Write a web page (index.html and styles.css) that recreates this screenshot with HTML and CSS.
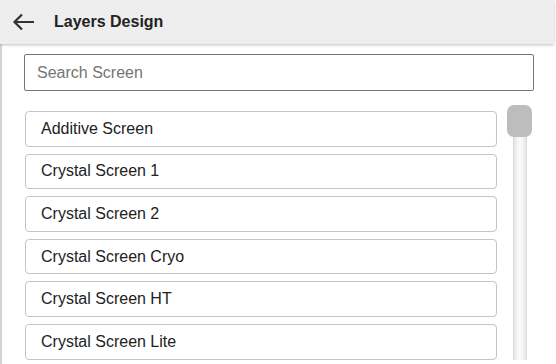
FILE: index.html
```html
<!DOCTYPE html>
<html>
<head>
<meta charset="utf-8">
<link rel="stylesheet" href="styles.css">
</head>
<body>
<div class="app">
  <header class="topbar">
    <button class="back" aria-label="Back">
      <svg width="24" height="24" viewBox="0 0 24 24"><path d="M23 12H3.5M11 4.5L3.5 12L11 19.5" fill="none" stroke="#333" stroke-width="2.2"/></svg>
    </button>
    <h1 class="title">Layers Design</h1>
  </header>
  <main class="content">
    <div class="search-row">
      <input class="search" type="text" placeholder="Search Screen">
    </div>
    <div class="list-area">
      <ul class="list">
        <li class="item">Additive Screen</li>
        <li class="item">Crystal Screen 1</li>
        <li class="item">Crystal Screen 2</li>
        <li class="item">Crystal Screen Cryo</li>
        <li class="item">Crystal Screen HT</li>
        <li class="item">Crystal Screen Lite</li>
      </ul>
      <div class="scrollbar">
        <div class="track"></div>
        <div class="thumb"></div>
      </div>
    </div>
  </main>
</div>
</body>
</html>
```
FILE: styles.css
```css
* { box-sizing: border-box; }
html, body { margin: 0; padding: 0; height: 100%; overflow: hidden; background: #fff; }
body { font-family: "Liberation Sans", Arial, sans-serif; color: #222; }
.app { height: 100%; display: flex; flex-direction: column; }
.topbar {
  height: 44px; width: 554px; background: #eeeeee;
  display: flex; align-items: center;
  box-shadow: 0 1px 3px rgba(0,0,0,0.25);
  position: relative; z-index: 1; flex: none;
}
.back { border: 0; background: none; padding: 0; margin: 0 0 0 11px; width: 24px; height: 24px; display: flex; }
.title { margin: 0 0 0 19px; font-size: 16px; font-weight: bold; color: #222; }
.content { flex: 1; border-left: 2px solid #d4d4d4; padding: 10px 0 0 22px; }
.search-row { width: 510px; }
.search {
  width: 510px; height: 37px; border: 1px solid #777; border-radius: 2px;
  padding: 0 12px; font-family: "Liberation Sans", Arial, sans-serif; font-size: 16px; color: #222;
  outline: none; display: block;
}
.search::placeholder { color: #757575; }
.list-area { display: flex; margin-top: 14px; }
.list { list-style: none; margin: 6px 0 0 1px; padding: 0; width: 472px; display: flex; flex-direction: column; gap: 7px; }
.item {
  height: 35.6px; border: 1px solid #c4c4c4; border-radius: 4px;
  padding: 0 15px; display: flex; align-items: center; font-size: 16px; color: #222;
}
.scrollbar { position: relative; width: 26px; margin-left: 10px; }
.track {
  position: absolute; left: 6px; top: 30px; bottom: 0; width: 14px;
  background: linear-gradient(to right, #d8d8d8 0, #f0f0f0 3px, #fafafa 50%, #f0f0f0 calc(100% - 3px), #d8d8d8 100%);
}
.thumb { position: absolute; left: 0; top: 0; width: 25px; height: 32px; background: #bdbdbd; border-radius: 7px; }
```
